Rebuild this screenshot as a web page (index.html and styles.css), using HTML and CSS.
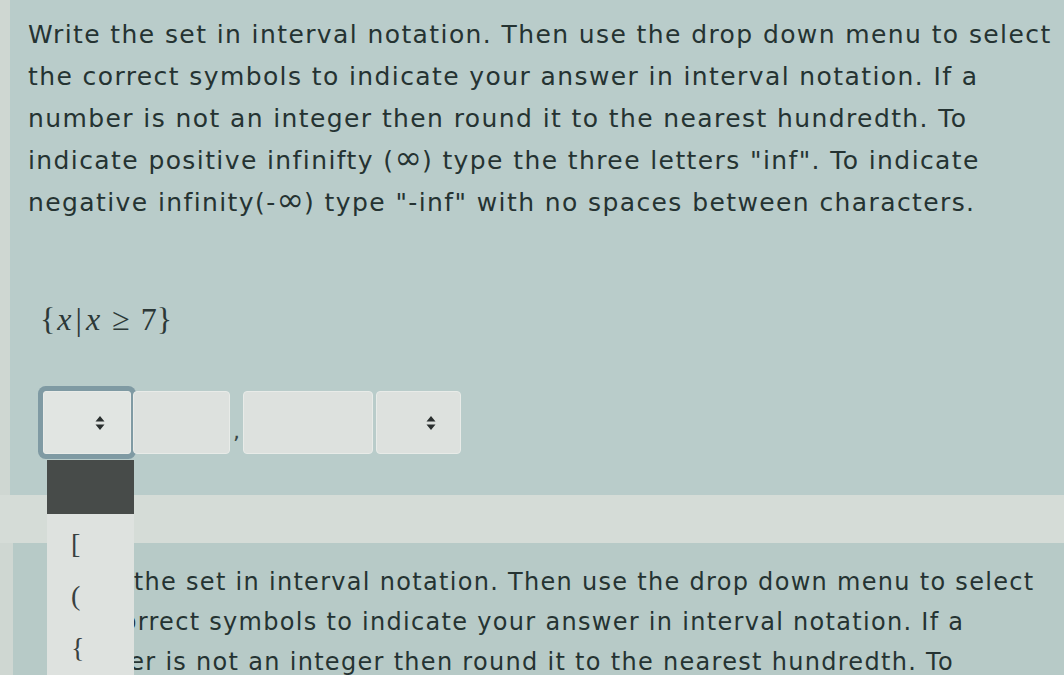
FILE: index.html
```html
<!DOCTYPE html>
<html>
<head>
<meta charset="utf-8">
<link rel="stylesheet" href="styles.css">
</head>
<body>
<div class="page">
  <section class="panel panel-top">
    <p class="prompt">Write the set in interval notation. Then use the drop down menu to select<br>the correct symbols to indicate your answer in interval notation. If a<br>number is not an integer then round it to the nearest hundredth. To<br>indicate positive infinifty (<span class="inf">∞</span>) type the three letters "inf". To indicate<br>negative infinity(-<span class="inf">∞</span>) type "-inf" with no spaces between characters.</p>
    <div class="math">{<i>x</i><span class="bar">|</span><i>x</i><span class="geq">≥</span>7}</div>
    <div class="answer-row">
      <div class="box select focused"><svg class="updown" viewBox="0 0 10 16" width="10" height="16"><path d="M5 1 L9.5 6.5 L0.5 6.5 Z M5 15 L9.5 9.5 L0.5 9.5 Z" fill="#2a2f2f"/></svg></div>
      <div class="box input first"></div>
      <span class="comma">,</span>
      <div class="box input second"></div>
      <div class="box select last"><svg class="updown" viewBox="0 0 10 16" width="10" height="16"><path d="M5 1 L9.5 6.5 L0.5 6.5 Z M5 15 L9.5 9.5 L0.5 9.5 Z" fill="#2a2f2f"/></svg></div>
    </div>
  </section>
  <div class="band"></div>
  <section class="panel panel-bottom">
    <p class="prompt small">Write the set in interval notation. Then use the drop down menu to select<br>the correct symbols to indicate your answer in interval notation. If a<br>number is not an integer then round it to the nearest hundredth. To</p>
  </section>
  <div class="dropdown">
    <div class="dd-head"></div>
    <ul class="dd-list">
      <li>[</li>
      <li>(</li>
      <li>{</li>
    </ul>
  </div>
</div>
</body>
</html>
```

FILE: styles.css
```css
html, body {
  margin: 0;
  padding: 0;
  height: 675px;
  overflow: hidden;
}
body {
  background: #cfd7d2;
  font-family: "DejaVu Sans", Verdana, sans-serif;
  color: #253332;
}
.page {
  position: relative;
  height: 675px;
  overflow: hidden;
}
.panel {
  background: #b9ccca;
}
.panel-top {
  margin-left: 10px;
  height: 495px;
  box-sizing: border-box;
  padding: 14px 0 0 18px;
}
.prompt {
  margin: 0;
  font-size: 25px;
  line-height: 42px;
  letter-spacing: 1.4px;
  white-space: nowrap;
}
.inf {
  font-size: 33px;
  line-height: 20px;
  letter-spacing: 0;
}
.math {
  margin: 75px 0 0 12px;
  font-family: "Liberation Serif", "DejaVu Serif", serif;
  font-size: 32px;
  line-height: 40px;
  color: #2c3837;
}
.math i {
  font-style: italic;
  padding: 0 2px;
}
.math .bar {
  font-style: normal;
  padding: 0 2px;
}
.math .geq {
  padding: 0 11px 0 10px;
}
.answer-row {
  display: flex;
  align-items: flex-start;
  margin: 52px 0 0 15px;
}
.box {
  height: 63px;
  box-sizing: border-box;
  background: #dde1de;
  border: 1px solid #e8ebe8;
  border-radius: 4px;
  display: flex;
  align-items: center;
  justify-content: center;
}
.select.focused {
  width: 88px;
  background: #e1e5e2;
  box-shadow: 0 0 0 5px #7f9aa3;
  border-radius: 3px;
  margin-right: 2px;
}
.select .updown {
  margin-left: 26px;
}
.select.last .updown {
  margin-left: 24px;
}
.input.first {
  width: 97px;
}
.comma {
  width: 13px;
  text-align: center;
  font-size: 22px;
  padding-top: 28px;
  color: #3a4545;
}
.input.second {
  width: 130px;
  margin-right: 3px;
}
.select.last {
  width: 85px;
}
.band {
  height: 48px;
  background: #d5dcd7;
}
.panel-bottom {
  margin-left: 13px;
  height: 132px;
  overflow: hidden;
  box-sizing: border-box;
  padding: 19px 0 0 42px;
  background: #b7cac7;
}
.prompt.small {
  font-size: 24px;
  line-height: 40px;
  letter-spacing: 1.3px;
}
.dropdown {
  position: absolute;
  left: 47px;
  top: 460px;
  width: 87px;
}
.dd-head {
  height: 54px;
  background: #474b49;
}
.dd-list {
  list-style: none;
  margin: 0;
  padding: 8px 0 0 0;
  height: 153px;
  background: #dee2df;
  font-family: "Liberation Serif", "DejaVu Serif", serif;
  font-size: 28px;
  color: #384040;
}
.dd-list li {
  height: 52px;
  line-height: 44px;
  padding-left: 24px;
}
```
